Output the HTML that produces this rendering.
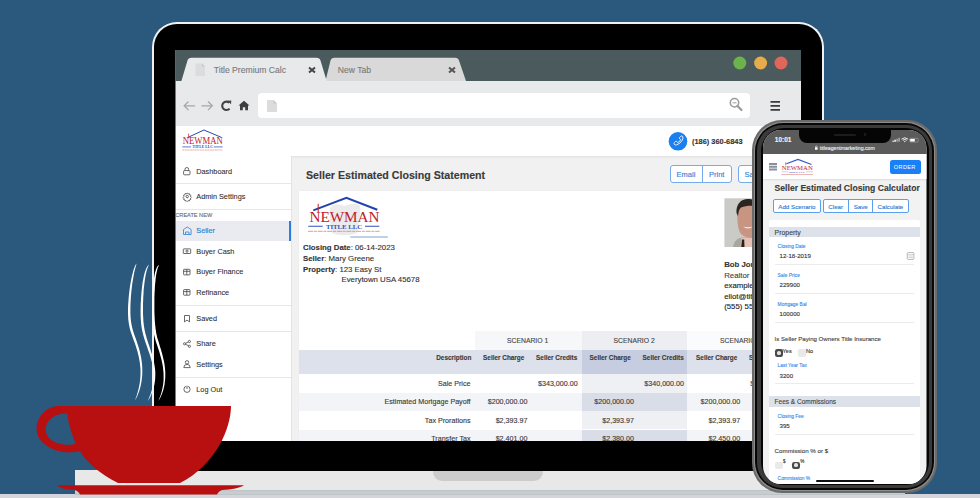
<!DOCTYPE html>
<html><head><meta charset="utf-8">
<style>
*{box-sizing:border-box;margin:0;padding:0}
html,body{width:980px;height:498px;overflow:hidden}
body{position:relative;background:#2b597e;font-family:"Liberation Sans",sans-serif;color:#333}
.a{position:absolute}
.t{position:absolute;white-space:nowrap;line-height:1;-webkit-text-stroke:.12px currentColor}
.full{position:absolute;left:0;top:0;width:980px;height:498px}
.sb{font-size:7.3px;color:#2e2e2e;left:196.3px;-webkit-text-stroke:.08px #2e2e2e}
.sep{position:absolute;left:175px;width:116px;height:1px;background:#e6e6e6}
.ico{position:absolute;left:183px}
.sc{font-size:6.8px;color:#454545}
.ch{font-size:6.4px;font-weight:bold;color:#3a3a3a}
.td{font-size:7.15px;color:#3a3a3a}
.pb{font-size:6.2px;color:#2a7ad8;top:203.8px}
.ph{font-size:6.9px;color:#444}
.pl{left:777.6px;font-size:4.9px;color:#3a8ae8}
.pv{left:779.6px;font-size:6.1px;color:#333}
.pu{left:775px;width:139px;height:1px;background:#ececec}
</style></head><body>

<!-- bottom strip -->
<div class="a" style="left:0;top:494px;width:980px;height:4px;background:#d3d4e0"></div>

<!-- laptop base -->
<div class="a" style="left:75px;top:470px;width:830px;height:20px;background:#e8e8e8"></div>
<div class="a" style="left:75px;top:490px;width:830px;height:4.5px;background:#cbcbcb;border-top:1px solid #bcc5cc;border-bottom:1px solid #bcc5cc"></div>
<div class="a" style="left:433px;top:470px;width:110px;height:11px;background:#cccccc;border-radius:0 0 9px 9px"></div>

<!-- laptop body -->
<div class="a" style="left:152px;top:22px;width:672px;height:449px;background:#000;border:2.1px solid #f0f1f3;border-bottom:none;border-radius:25px 25px 0 0"></div>

<!-- ============ SCREEN ============ -->
<div class="full" style="clip-path:inset(50px 179px 57px 175px)">
  <div class="a" style="left:175px;top:50px;width:626px;height:391px;background:#f1f1f1"></div>
  <!-- tab strip -->
  <div class="a" style="left:175px;top:50px;width:626px;height:31px;background:#4b5a5c"></div>
  <svg class="full" viewBox="0 0 980 498">
    <path d="M325.5,81 L330.5,60.5 Q331.3,57.7 334.5,57.7 L455,57.7 Q458.2,57.7 459,60.5 L466,81 Z" fill="#d9d9d9"/>
    <path d="M181.4,81 L187.5,60.5 Q188.3,57.7 191.5,57.7 L316.5,57.7 Q319.7,57.7 320.5,60.5 L326.7,81 Z" fill="#e8e9eb"/>
    <circle cx="739.8" cy="63" r="6.5" fill="#6ab34d"/>
    <circle cx="760.6" cy="63" r="6.5" fill="#e6ab4a"/>
    <circle cx="781" cy="63" r="6.5" fill="#e0665b"/>
  </svg>
  <div class="t" style="left:213.8px;top:65.6px;font-size:8.6px;color:#7a7a7a">Title Premium Calc</div>
  <div class="t" style="left:337.8px;top:65.6px;font-size:8.6px;color:#7a7a7a">New Tab</div>
  <!-- toolbar -->
  <div class="a" style="left:175px;top:81px;width:626px;height:45px;background:#e8e9eb"></div>
  <div class="a" style="left:258px;top:92.5px;width:492px;height:25.3px;background:#fff;border-radius:4px"></div>
  <svg class="full" viewBox="0 0 980 498">
    <!-- tab icons -->
    <path d="M195.5,63.5 h6.5 l3,3 v9.5 h-9.5 z" fill="#dcdcdc"/>
    <path d="M202,63.5 v3 h3 z" fill="#c8c8c8"/>
    <path d="M309,67.5 l6,5 M315,67.5 l-6,5" stroke="#444" stroke-width="2"/>
    <path d="M449,67.5 l6,5 M455,67.5 l-6,5" stroke="#555" stroke-width="2"/>
    <!-- nav -->
    <path d="M184,105.8 h11 M188.5,101.5 l-4.3,4.3 l4.3,4.3" stroke="#a8a8a8" stroke-width="1.3" fill="none"/>
    <path d="M201.5,105.8 h11 M208,101.5 l4.3,4.3 l-4.3,4.3" stroke="#a8a8a8" stroke-width="1.3" fill="none"/>
    <path d="M229.3,102.8 A4.2,4.2 0 1 0 229.6,108.6" stroke="#444" stroke-width="2.1" fill="none"/><path d="M227.5,100.8 l3.8,-.3 -.3,3.8 z" fill="#444"/>
    <path d="M238.5,105.5 l5.5,-4.8 l5.5,4.8 h-1.5 v4.8 h-2.8 v-3 h-2.4 v3 h-2.8 v-4.8 z" fill="#3e3e3e"/>
    <path d="M267,100 h6.5 l3.5,3.5 v8.5 h-10 z" fill="#dcdcdc"/>
    <path d="M273.5,100 v3.5 h3.5 z" fill="#cacaca"/>
    <!-- search -->
    <circle cx="734.5" cy="102.8" r="4.2" stroke="#9a9a9a" stroke-width="1.5" fill="none"/>
    <path d="M732.5,102.8 h4" stroke="#9a9a9a" stroke-width="1"/>
    <path d="M737.5,106 l4,4" stroke="#9a9a9a" stroke-width="2.2" stroke-linecap="round"/>
    <!-- hamburger -->
    <path d="M770.5,101.8 h9.5 M770.5,105.8 h9.5 M770.5,109.8 h9.5" stroke="#3a3a3a" stroke-width="1.7"/>
  </svg>
  <!-- app header -->
  <div class="a" style="left:175px;top:126px;width:626px;height:30px;background:#fff;box-shadow:0 1px 2px rgba(0,0,0,.08)"></div>
  <svg class="full" viewBox="0 0 980 498">
    <path d="M187.5,137.6 L203.9,130 L221.2,137.3" stroke="#2a48b0" stroke-width="1" fill="none"/>
    <path d="M188.6,133.6 v4.6" stroke="#c22" stroke-width=".7"/>
    <text x="182.8" y="144.4" font-family="Liberation Serif" font-size="9.6" fill="#c0222c" textLength="39.9" lengthAdjust="spacingAndGlyphs">NEWMAN</text>
    <path d="M182.3,146.9 h8.7 M213.7,146.9 h9" stroke="#3a5ac8" stroke-width=".8"/>
    <text x="192.6" y="148.4" font-family="Liberation Serif" font-size="4" fill="#2a48b0" font-weight="bold" textLength="20.4" lengthAdjust="spacingAndGlyphs">TITLE LLC</text>
    <path d="M182.3,150 h40.4" stroke="#d86060" stroke-width=".7" stroke-dasharray="2 .5" opacity=".75"/>
  </svg>
  <svg class="full" viewBox="0 0 980 498">
    <circle cx="678" cy="141.3" r="9.3" fill="#1a7ff0"/>
    <path d="M674.5,144.5 q-1,-1 0,-2 l1,-1 q1,-.5 1.6,.3 l.6,.8 q2.2,-.8 3,-3 l-.8,-.6 q-.8,-.6 -.3,-1.6 l1,-1 q1,-1 2,0 q1,1.5 -.5,4 q-2,3.5 -5.5,4.5 q-1.5,.3 -2.1,-.4z" fill="none" stroke="#fff" stroke-width=".9"/>
  </svg>
  <div class="t" style="left:692px;top:137.8px;font-size:7.4px;font-weight:bold;color:#333">(186) 360-6843</div>

  <!-- sidebar -->
  <div class="a" style="left:175px;top:156px;width:116.5px;height:285px;background:#fff;border-right:1px solid #e3e3e3"></div>
  <div class="sep" style="top:183.3px"></div>
  <div class="sep" style="top:209.3px"></div>
  <div class="sep" style="top:305px"></div>
  <div class="sep" style="top:331.2px"></div>
  <div class="sep" style="top:377.3px"></div>
  <div class="a" style="left:175px;top:221px;width:116px;height:19.7px;background:#e9ebf1;border-right:2px solid #2a7ee0"></div>
  <div class="t sb" style="top:167.5px">Dashboard</div>
  <div class="t sb" style="top:193.3px">Admin Settings</div>
  <div class="t" style="left:175.3px;top:213.1px;font-size:5.6px;color:#6c6c6c">CREATE NEW</div>
  <div class="t sb" style="top:227.2px;color:#2a7ee0">Seller</div>
  <div class="t sb" style="top:247.7px">Buyer Cash</div>
  <div class="t sb" style="top:268.4px">Buyer Finance</div>
  <div class="t sb" style="top:288.7px">Refinance</div>
  <div class="t sb" style="top:314.7px">Saved</div>
  <div class="t sb" style="top:340.4px">Share</div>
  <div class="t sb" style="top:360.7px">Settings</div>
  <div class="t sb" style="top:386.4px">Log Out</div>
  <svg class="full" viewBox="0 0 980 498" fill="none" stroke="#444" stroke-width=".8">
    <!-- lock -->
    <rect x="183.6" y="170.6" width="6.4" height="4.2" rx=".8"/>
    <path d="M185,170.6 v-1.3 a1.8,1.8 0 0 1 3.6,0 v1.3"/>
    <!-- gear -->
    <path d="M187.2,193 l.9,.9 1.2,-.3 .3,1.2 1.2,.4 -.3,1.2 .9,.9 -.9,.9 .3,1.2 -1.2,.4 -.3,1.2 -1.2,-.3 -.9,.9 -.9,-.9 -1.2,.3 -.3,-1.2 -1.2,-.4 .3,-1.2 -.9,-.9 .9,-.9 -.3,-1.2 1.2,-.4 .3,-1.2 1.2,.3 z"/><circle cx="187.2" cy="196.6" r="1.2"/>
    <!-- seller icon -->
    <path d="M183.5,234.5 v-5 l3.8,-2.5 l3.8,2.5 v5 z M185.5,234.5 v-2.5 h3.5 v2.5" stroke="#2a7ee0"/>
    <!-- buyer cash -->
    <rect x="183.3" y="248.9" width="7.4" height="4.6" rx=".5"/><circle cx="187" cy="251.2" r="1.1"/>
    <!-- buyer finance -->
    <rect x="183.6" y="269.3" width="6.4" height="5.6" rx=".6"/><path d="M183.6,271.3 h6.4 M186.8,269.3 v5.6"/>
    <!-- refinance -->
    <rect x="183.6" y="289.6" width="6.4" height="5.6" rx=".6"/><path d="M183.6,291.6 h6.4 M186.8,289.6 v5.6"/>
    <!-- saved -->
    <path d="M184.5,315.5 h5 v6.4 l-2.5,-1.8 l-2.5,1.8 z"/>
    <!-- share -->
    <circle cx="184.6" cy="343.8" r="1.1"/><circle cx="189.4" cy="341.5" r="1.1"/><circle cx="189.4" cy="346.3" r="1.1"/>
    <path d="M185.6,343.3 l2.8,-1.3 M185.6,344.3 l2.8,1.4"/>
    <!-- settings (user) -->
    <circle cx="187" cy="362.3" r="1.7"/><path d="M183.8,367.6 q0,-3.2 3.2,-3.2 q3.2,0 3.2,3.2 z"/>
    <!-- logout -->
    <circle cx="187" cy="389.3" r="3.1"/><path d="M187,385.5 v3.3" stroke="#fff" stroke-width="2"/><path d="M187,385.8 v3.3"/>
  </svg>

  <!-- ===== main content ===== -->
  <div class="t" style="left:306px;top:169.7px;font-size:10.65px;font-weight:bold;color:#3a3a3a">Seller Estimated Closing Statement</div>
  <div class="a" style="left:669.8px;top:165.4px;width:62px;height:17.8px;border:1px solid #74acec;border-radius:3px;background:#fff"></div>
  <div class="a" style="left:701.5px;top:165.4px;width:1px;height:17.8px;background:#74acec"></div>
  <div class="a" style="left:737.9px;top:165.4px;width:40px;height:17.8px;border:1px solid #74acec;border-radius:3px;background:#fff"></div>
  <div class="t" style="left:676.6px;top:170.6px;font-size:7.5px;color:#2f7fd8">Email</div>
  <div class="t" style="left:709px;top:170.6px;font-size:7.5px;color:#2f7fd8">Print</div>
  <div class="t" style="left:744.6px;top:170.6px;font-size:7.5px;color:#2f7fd8">Save</div>

  <!-- card -->
  <div class="a" style="left:298.5px;top:190.8px;width:496px;height:260px;background:#fff;box-shadow:0 0 1px rgba(0,0,0,.08)"></div>
  <svg class="full" viewBox="0 0 980 498">
    <path d="M330,208 C333,203 340,204 344,206 C350,204 357,202 360,206 C361,214 359,224 357,233 C350,236 338,236 332,233 C330,225 329,215 330,208Z" fill="#ebebeb"/>
    <path d="M313.3,210.4 L346.4,197.7 L377.3,209.7" stroke="#2442b0" stroke-width="2" fill="none"/>
    <path d="M318.2,203.8 v8.5" stroke="#c0202a" stroke-width="1"/>
    <text x="309.4" y="221.6" font-family="Liberation Serif" font-size="14.5" fill="#c0202a" textLength="70.2" lengthAdjust="spacingAndGlyphs">NEWMAN</text>
    <path d="M308.3,226.2 h14.4 M365,226.2 h14.3" stroke="#3050c0" stroke-width="1.1"/>
    <text x="326" y="228.8" font-family="Liberation Serif" font-weight="bold" font-size="7" fill="#3050c0" textLength="36" lengthAdjust="spacingAndGlyphs">TITLE LLC</text>
    <path d="M308,231.3 h71.6" stroke="#d46a6a" stroke-width=".9" stroke-dasharray="5 .8 3 .8" opacity=".75"/>
    <path d="M350.3,237 h37.5" stroke="#a8c0dc" stroke-width="1.3"/>
  </svg>
  <div class="t" style="left:303px;top:244px;font-size:7.8px;color:#333"><b>Closing Date</b>: 06-14-2023</div>
  <div class="t" style="left:303px;top:254.6px;font-size:7.8px;color:#333"><b>Seller</b>: Mary Greene</div>
  <div class="t" style="left:303px;top:265.6px;font-size:7.8px;color:#333"><b>Property</b>: 123 Easy St</div>
  <div class="t" style="left:341.5px;top:276.2px;font-size:7.8px;color:#333">Everytown USA 45678</div>

  <!-- realtor -->
  <svg class="full" viewBox="0 0 980 498">
    <rect x="724.4" y="198.3" width="30" height="48.7" fill="#cacac6"/>
    <path d="M733,247 C734,241 737,238.5 742,237.5 L756,237.5 L756,247 Z" fill="#a9a69e"/>
    <path d="M740.5,247 L741.5,238 L756,238 L756,247 Z" fill="#e6c2b6"/>
    <path d="M741.2,247 L742,239.5 L744.2,239.5 L744.5,247 Z" fill="#2a2220"/>
    <path d="M737.2,214 C737,206 741,201 748,200.5 C753,200.2 756,203 756,206 L756,237.5 C752,238.5 745,238 741,234 C738,230 737.3,222 737.2,214 Z" fill="#c99583"/>
    <path d="M736.5,213 C736,205 740,199.5 747,199 C752,198.8 756,200.5 756,202 L756,206.5 C752,205 746,205.5 741,207.5 C739,209 738.5,212 738,216 Z" fill="#2b2522"/>
    <path d="M743,226.5 Q748,230.5 753,226.5 Q748,228 743,226.5 Z" fill="#f4eee8"/>
  </svg>
  <div class="t" style="left:724.2px;top:261.4px;font-size:7.8px;font-weight:bold;color:#333">Bob Jones</div>
  <div class="t" style="left:724.2px;top:271.9px;font-size:7.8px;color:#444">Realtor</div>
  <div class="t" style="left:724.2px;top:282.4px;font-size:7.8px;color:#222">example</div>
  <div class="t" style="left:724.2px;top:292.8px;font-size:7.8px;color:#222">eliot@titleagent</div>
  <div class="t" style="left:724.2px;top:303.4px;font-size:7.8px;color:#222">(555) 555-5555</div>

  <!-- table -->
  <div class="a" style="left:475px;top:331px;width:106.5px;height:19px;background:#f6f7f9"></div>
  <div class="a" style="left:581.5px;top:331px;width:105.5px;height:19px;background:#eceef2"></div>
  <div class="a" style="left:687px;top:331px;width:110px;height:19px;background:#fafbfc"></div>
  <div class="a" style="left:298.5px;top:349.8px;width:500px;height:24px;background:#dde1eb"></div>
  <div class="a" style="left:581.5px;top:349.8px;width:105.5px;height:24px;background:#c6cde0"></div>
  <div class="a" style="left:298.5px;top:393px;width:500px;height:18.3px;background:#f3f4f7"></div>
  <div class="a" style="left:298.5px;top:429.5px;width:500px;height:18.3px;background:#f3f4f7"></div>
  <div class="a" style="left:581.5px;top:373.8px;width:105.5px;height:19.2px;background:#eff0f3"></div>
  <div class="a" style="left:581.5px;top:393px;width:105.5px;height:18.3px;background:#d9dde7"></div>
  <div class="a" style="left:581.5px;top:411.3px;width:105.5px;height:18.2px;background:#eff0f3"></div>
  <div class="a" style="left:581.5px;top:429.5px;width:105.5px;height:18.3px;background:#d9dde7"></div>

  <div class="t sc" style="left:507px;top:337.6px">SCENARIO 1</div>
  <div class="t sc" style="left:613.5px;top:337.6px">SCENARIO 2</div>
  <div class="t sc" style="left:720px;top:337.6px">SCENARIO 3</div>
  <div class="t ch" style="right:508.6px;top:354.6px">Description</div>
  <div class="t ch" style="left:483.1px;top:354.6px">Seller Charge</div>
  <div class="t ch" style="left:536.1px;top:354.6px">Seller Credits</div>
  <div class="t ch" style="left:589.6px;top:354.6px">Seller Charge</div>
  <div class="t ch" style="left:642.6px;top:354.6px">Seller Credits</div>
  <div class="t ch" style="left:696.1px;top:354.6px">Seller Charge</div>
  <div class="t ch" style="left:749.1px;top:354.6px">Seller Credits</div>

  <div class="t td r" style="right:509.5px;top:380.6px">Sale Price</div>
  <div class="t td r" style="right:509.5px;top:399.4px">Estimated Mortgage Payoff</div>
  <div class="t td r" style="right:509.5px;top:417.7px">Tax Prorations</div>
  <div class="t td r" style="right:509.5px;top:436.1px">Transfer Tax</div>

  <div class="t td r" style="right:402.3px;top:380.6px">$343,000.00</div>
  <div class="t td r" style="right:296px;top:380.6px">$340,000.00</div>
  <div class="t td r" style="right:190px;top:380.6px">$345,000.00</div>
  <div class="t td r" style="right:452.6px;top:399.4px">$200,000.00</div>
  <div class="t td r" style="right:346px;top:399.4px">$200,000.00</div>
  <div class="t td r" style="right:239.8px;top:399.4px">$200,000.00</div>
  <div class="t td r" style="right:452.6px;top:417.7px">$2,393.97</div>
  <div class="t td r" style="right:346px;top:417.7px">$2,393.97</div>
  <div class="t td r" style="right:239.8px;top:417.7px">$2,393.97</div>
  <div class="t td r" style="right:452.6px;top:436.1px">$2,401.00</div>
  <div class="t td r" style="right:346px;top:436.1px">$2,380.00</div>
  <div class="t td r" style="right:239.8px;top:436.1px">$2,450.00</div>
</div>


<!-- ============ PHONE ============ -->
<div class="a" style="left:752px;top:120px;width:185px;height:373px;border-radius:30px;background:#6a6a6a"></div>
<div class="a" style="left:754px;top:122px;width:181px;height:369px;border-radius:28px;background:#8c8c8c"></div>
<div class="a" style="left:755px;top:123px;width:179px;height:367px;border-radius:28px;background:#070707"></div>
<div class="a" style="left:757.3px;top:125.3px;width:174.4px;height:362.4px;border-radius:25px;background:#3a3a3a"></div>
<div class="a" style="left:760.5px;top:128px;width:168px;height:357px;border-radius:23px;background:#050505"></div>
<div class="full" style="clip-path:inset(130px 53.5px 14px 763px round 18px)">
  <div class="a" style="left:763px;top:130px;width:164px;height:354px;background:#f2f2f2"></div>
  <div class="a" style="left:763px;top:130px;width:164px;height:24.3px;background:#5b5b5b"></div>
  <div class="a" style="left:798.5px;top:128px;width:92px;height:15px;background:#050505;border-radius:0 0 8px 8px"></div>
  <div class="a" style="left:833.5px;top:133.5px;width:22px;height:2px;background:#1c1c1c;border-radius:1px"></div>
  <div class="a" style="left:863.5px;top:133.3px;width:2.4px;height:2.4px;background:#1a1a3a;border-radius:50%"></div>
  <div class="t" style="left:774.8px;top:136.9px;font-size:6.5px;font-weight:bold;color:#f4f4f4">10:01</div>
  <svg class="full" viewBox="0 0 980 498">
    <path d="M892.5,141.8 h1.2 v-1 h-1.2z M894.5,141.8 h1.2 v-2 h-1.2z M896.5,141.8 h1.2 v-3 h-1.2z M898.5,141.8 h1.2 v-4 h-1.2z" fill="#bbb"/>
    <path d="M892.5,141.8 h1.2 v-1 h-1.2z M894.5,141.8 h1.2 v-2 h-1.2z" fill="#fff"/>
    <path d="M901.5,139.2 q3.3,-3 6.6,0 M902.8,140.3 q2,-1.8 4,0" stroke="#fff" stroke-width=".9" fill="none"/>
    <circle cx="904.8" cy="141.6" r=".7" fill="#fff"/>
    <rect x="909.6" y="138.3" width="8.6" height="3.8" rx="1" fill="none" stroke="#aaa" stroke-width=".6"/>
    <rect x="910.2" y="138.9" width="4.6" height="2.6" fill="#fff"/>
    <rect x="914.8" y="137.2" width="2" height="1" fill="none"/>
    <rect x="815" y="147.2" width="2.6" height="2.6" rx=".3" fill="#fff"/>
    <path d="M815.6,147.3 v-.8 a.7,.7 0 0 1 1.4,0 v.8" stroke="#fff" stroke-width=".5" fill="none"/>
  </svg>
  <div class="t" style="left:819.7px;top:145.6px;font-size:5.2px;color:#f0f0f0">titleagentmarketing.com</div>
  <!-- header -->
  <div class="a" style="left:763px;top:154.3px;width:164px;height:24.7px;background:#fff;box-shadow:0 1px 1.5px rgba(0,0,0,.1)"></div>
  <div class="a" style="left:769px;top:163.4px;width:8px;height:1.3px;background:#8a8f99;box-shadow:0 2.75px 0 #8a8f99,0 5.5px 0 #8a8f99"></div>
  <svg class="full" viewBox="0 0 980 498">
    <path d="M786.5,163.8 L798,159.4 L811.5,164.6" stroke="#3656c8" stroke-width="1.1" fill="none"/>
    <path d="M785.8,162.3 v3" stroke="#c22" stroke-width=".7"/>
    <text x="781.8" y="170.1" font-family="Liberation Serif" font-size="6.4" fill="#c8222c" textLength="31" lengthAdjust="spacingAndGlyphs">NEWMAN</text>
    <path d="M781.5,171.8 h6.8 M806,171.8 h6.8" stroke="#c5cde8" stroke-width=".9"/>
    <text x="789" y="173.2" font-family="Liberation Serif" font-size="2.8" fill="#2a48b0" font-weight="bold" textLength="15.8" lengthAdjust="spacingAndGlyphs">TITLE LLC</text>
    <path d="M781.2,174.5 h31.6" stroke="#d85050" stroke-width=".6" opacity=".7"/>
  </svg>
  <div class="a" style="left:889.5px;top:160px;width:31px;height:14px;background:#1a80f8;border-radius:2.5px"></div>
  <div class="t" style="left:893.8px;top:165.2px;font-size:5.6px;color:#fff;letter-spacing:.35px;-webkit-text-stroke:0">ORDER</div>
  <!-- body -->
  <div class="t" style="left:774.6px;top:184px;font-size:8.6px;font-weight:bold;color:#3a3a3a">Seller Estimated Closing Calculator</div>
  <div class="a" style="left:773px;top:199.4px;width:47.8px;height:14px;border:1px solid #5aa0ee;border-radius:2px;background:#fff"></div>
  <div class="a" style="left:823.3px;top:199.4px;width:85.7px;height:14px;border:1px solid #5aa0ee;border-radius:2px;background:#fff"></div>
  <div class="a" style="left:848px;top:199.4px;width:.9px;height:14px;background:#5aa0ee"></div>
  <div class="a" style="left:871.8px;top:199.4px;width:.9px;height:14px;background:#5aa0ee"></div>
  <div class="t pb" style="left:778.3px">Add Scenario</div>
  <div class="t pb" style="left:828.3px">Clear</div>
  <div class="t pb" style="left:853.7px">Save</div>
  <div class="t pb" style="left:877.5px">Calculate</div>
  <!-- card -->
  <div class="a" style="left:769px;top:220.2px;width:151.2px;height:270px;background:#fff;border-radius:2px"></div>
  <div class="a" style="left:769px;top:226.5px;width:151.2px;height:10.5px;background:#dde1ea"></div>
  <div class="a" style="left:769px;top:396.2px;width:151.2px;height:10.8px;background:#dde1ea"></div>
  <div class="t ph" style="left:774.6px;top:229.6px">Property</div>
  <div class="t ph" style="left:774.6px;top:399.2px;font-size:6.5px">Fees &amp; Commissions</div>
  <div class="t pl" style="top:244.9px">Closing Date</div>
  <div class="t pv" style="top:252.7px">12-18-2019</div>
  <div class="a pu" style="top:264px"></div>
  <div class="t pl" style="top:273.8px">Sale Price</div>
  <div class="t pv" style="top:281.5px">229900</div>
  <div class="a pu" style="top:293px"></div>
  <div class="t pl" style="top:302.7px">Mortgage Bal</div>
  <div class="t pv" style="top:310.7px">100000</div>
  <div class="a pu" style="top:321.9px"></div>
  <div class="t" style="left:774.6px;top:335.8px;font-size:6.1px;color:#444">Is Seller Paying Owners Title Insurance</div>
  <div class="a" style="left:775px;top:349px;width:8.4px;height:7.5px;border-radius:2.2px;background:#4a4a4a"><div class="a" style="left:2.3px;top:1.9px;width:3.8px;height:3.7px;border-radius:50%;background:#e4e4e4"></div></div>
  <div class="a" style="left:798px;top:349px;width:8px;height:7.5px;border-radius:2px;background:#e9e9e9"></div>
  <div class="t" style="left:782.6px;top:348.7px;font-size:5.6px;color:#333">Yes</div>
  <div class="t" style="left:806px;top:348.7px;font-size:5.6px;color:#333">No</div>
  <div class="t pl" style="top:364.4px">Last Year Tax</div>
  <div class="t pv" style="top:372.7px">3200</div>
  <div class="a pu" style="top:383.4px"></div>
  <div class="t pl" style="top:414.5px">Closing Fee</div>
  <div class="t pv" style="top:422.8px">395</div>
  <div class="a pu" style="top:434.3px"></div>
  <div class="t" style="left:774.6px;top:447.9px;font-size:6.2px;color:#444">Commission % or $</div>
  <div class="a" style="left:775.3px;top:461.5px;width:7.5px;height:7.5px;border-radius:2px;background:#e9e9e9"></div>
  <div class="t" style="left:783px;top:459.6px;font-size:4.6px;color:#333">$</div>
  <div class="a" style="left:792px;top:461.5px;width:8.2px;height:7.5px;border-radius:2.2px;background:#4a4a4a"><div class="a" style="left:2.2px;top:1.9px;width:3.8px;height:3.7px;border-radius:50%;background:#e4e4e4"></div></div>
  <div class="t" style="left:800.2px;top:459.6px;font-size:4.6px;color:#333">%</div>
  <div class="t pl" style="top:476.6px">Commission %</div>
  <svg class="full" viewBox="0 0 980 498">
    <rect x="907.3" y="252.6" width="6.6" height="6.8" rx=".8" fill="none" stroke="#999" stroke-width=".7"/>
    <path d="M907.3,254.6 h6.6 M908.5,256 h4.4 M908.5,257.5 h4.4" stroke="#aaa" stroke-width=".5"/>
  </svg>
  <div class="a" style="left:815.5px;top:479.5px;width:58.5px;height:2px;background:#111;border-radius:1px"></div>
</div>

<div class="a" style="left:175px;top:50px;width:1px;height:391px;background:#3f6f96;opacity:.85"></div>
<!-- steam -->
<svg class="full" viewBox="0 0 980 498" fill="#fff">
<path d="M136.3,263.8 L135.5,265.0 L134.8,266.4 L134.2,268.0 L133.6,269.8 L133.0,271.8 L132.5,273.9 L131.9,276.1 L131.4,278.4 L131.0,280.8 L130.5,283.3 L130.1,285.8 L129.7,288.4 L129.4,291.0 L129.1,293.6 L128.8,296.2 L128.6,298.8 L128.4,301.4 L128.2,303.9 L128.1,306.4 L128.0,308.8 L128.0,311.1 L128.0,313.3 L128.1,315.5 L128.2,317.6 L128.3,319.7 L128.6,321.7 L128.8,323.6 L129.2,325.5 L129.6,327.4 L130.0,329.2 L130.5,331.0 L131.1,332.8 L131.7,334.6 L132.3,336.3 L132.9,338.1 L133.6,339.9 L134.3,341.8 L135.0,343.7 L135.7,345.7 L136.3,347.7 L137.0,349.9 L137.6,352.1 L138.2,354.4 L138.8,356.7 L139.2,359.2 L139.7,361.7 L140.0,364.2 L140.3,366.9 L140.5,369.6 L140.5,372.3 L140.5,375.1 L140.3,378.0 L140.0,381.0 L139.6,384.0 L139.0,387.0 L138.3,390.1 L137.4,393.2 L136.4,396.5 L135.2,399.8 L135.4,399.8 L137.0,396.7 L138.3,393.5 L139.4,390.4 L140.3,387.3 L141.0,384.2 L141.5,381.2 L141.9,378.2 L142.2,375.2 L142.3,372.3 L142.3,369.5 L142.2,366.7 L142.0,364.0 L141.7,361.4 L141.3,358.8 L140.9,356.3 L140.3,353.9 L139.8,351.5 L139.2,349.2 L138.5,347.1 L137.9,345.0 L137.2,342.9 L136.6,341.0 L135.9,339.1 L135.3,337.3 L134.6,335.5 L134.0,333.8 L133.4,332.0 L132.9,330.3 L132.4,328.6 L132.0,326.8 L131.6,325.0 L131.3,323.2 L131.0,321.3 L130.8,319.4 L130.6,317.4 L130.5,315.4 L130.4,313.3 L130.4,311.1 L130.4,308.8 L130.4,306.4 L130.5,304.0 L130.6,301.5 L130.8,299.0 L130.9,296.4 L131.2,293.8 L131.4,291.2 L131.7,288.6 L132.0,286.1 L132.3,283.6 L132.7,281.1 L133.1,278.7 L133.5,276.4 L133.9,274.2 L134.3,272.1 L134.8,270.2 L135.2,268.4 L135.7,266.7 L136.1,265.2 L136.5,263.8Z"/>
<path d="M148.7,264.8 L147.8,265.7 L147.0,267.0 L146.2,268.5 L145.5,270.2 L144.9,272.1 L144.4,274.1 L143.8,276.2 L143.4,278.5 L142.9,280.8 L142.5,283.3 L142.2,285.8 L141.9,288.4 L141.6,291.0 L141.4,293.6 L141.2,296.2 L141.0,298.8 L140.9,301.4 L140.7,303.9 L140.7,306.4 L140.6,308.8 L140.6,311.1 L140.6,313.3 L140.6,315.5 L140.7,317.6 L140.8,319.6 L141.0,321.6 L141.1,323.5 L141.4,325.4 L141.6,327.3 L141.9,329.1 L142.3,330.9 L142.7,332.7 L143.1,334.5 L143.6,336.3 L144.1,338.1 L144.7,339.9 L145.3,341.8 L146.0,343.7 L146.7,345.7 L147.4,347.8 L148.1,349.9 L148.9,352.1 L149.7,354.4 L150.4,356.8 L151.1,359.2 L151.8,361.7 L152.4,364.3 L152.8,366.9 L153.2,369.6 L153.5,372.4 L153.6,375.2 L153.6,378.2 L153.4,381.1 L153.1,384.2 L152.5,387.3 L151.7,390.4 L150.7,393.7 L149.4,397.0 L148.0,400.5 L148.2,400.5 L150.1,397.3 L151.5,394.0 L152.8,390.8 L153.7,387.6 L154.4,384.4 L154.9,381.3 L155.2,378.2 L155.3,375.2 L155.3,372.3 L155.1,369.4 L154.7,366.6 L154.3,363.9 L153.8,361.3 L153.2,358.7 L152.5,356.2 L151.8,353.8 L151.0,351.4 L150.3,349.2 L149.6,347.0 L148.9,344.9 L148.2,342.9 L147.6,341.0 L147.0,339.2 L146.5,337.4 L146.0,335.6 L145.5,333.9 L145.1,332.1 L144.7,330.4 L144.4,328.7 L144.1,326.9 L143.8,325.1 L143.6,323.3 L143.4,321.4 L143.3,319.5 L143.2,317.5 L143.1,315.4 L143.0,313.3 L143.0,311.1 L143.0,308.8 L143.0,306.4 L143.0,304.0 L143.1,301.5 L143.2,298.9 L143.3,296.3 L143.5,293.7 L143.6,291.1 L143.8,288.6 L144.1,286.0 L144.4,283.5 L144.7,281.1 L145.0,278.8 L145.4,276.5 L145.8,274.4 L146.2,272.4 L146.7,270.6 L147.2,268.9 L147.8,267.4 L148.3,266.1 L148.9,264.8Z"/>
<path d="M159.2,264.9 L158.3,265.4 L157.5,266.2 L156.8,267.4 L156.2,268.8 L155.7,270.4 L155.1,272.3 L154.7,274.3 L154.3,276.5 L153.9,278.8 L153.5,281.3 L153.2,283.9 L153.0,286.6 L152.7,289.3 L152.5,292.1 L152.4,295.0 L152.2,297.8 L152.2,300.6 L152.1,303.4 L152.0,306.2 L152.0,308.9 L152.0,311.5 L152.1,314.0 L152.2,316.5 L152.2,318.9 L152.4,321.1 L152.5,323.3 L152.7,325.4 L152.9,327.4 L153.1,329.3 L153.4,331.1 L153.7,332.8 L154.0,334.4 L154.4,336.0 L154.8,337.5 L155.2,339.1 L155.6,340.6 L156.1,342.3 L156.7,343.9 L157.3,345.7 L157.9,347.6 L158.6,349.7 L159.3,351.8 L159.9,354.1 L160.6,356.4 L161.3,358.9 L161.9,361.5 L162.4,364.1 L162.9,366.8 L163.2,369.6 L163.5,372.5 L163.6,375.4 L163.6,378.4 L163.5,381.4 L163.1,384.5 L162.6,387.6 L161.9,390.7 L161.0,393.9 L159.8,397.2 L158.5,400.5 L158.7,400.5 L160.4,397.4 L161.8,394.2 L163.0,391.0 L163.8,387.9 L164.5,384.7 L164.9,381.5 L165.2,378.4 L165.3,375.4 L165.3,372.4 L165.1,369.4 L164.8,366.6 L164.4,363.8 L163.9,361.0 L163.3,358.4 L162.7,355.9 L162.1,353.5 L161.4,351.2 L160.8,349.0 L160.1,346.9 L159.5,345.0 L159.0,343.2 L158.5,341.5 L158.0,339.9 L157.5,338.4 L157.1,336.9 L156.8,335.4 L156.4,333.9 L156.1,332.3 L155.9,330.7 L155.6,328.9 L155.4,327.1 L155.2,325.2 L155.0,323.1 L154.8,321.0 L154.7,318.7 L154.6,316.4 L154.5,314.0 L154.4,311.5 L154.4,308.9 L154.4,306.2 L154.4,303.5 L154.4,300.7 L154.4,297.9 L154.5,295.0 L154.6,292.2 L154.8,289.5 L154.9,286.7 L155.1,284.1 L155.4,281.5 L155.6,279.1 L155.9,276.8 L156.2,274.6 L156.6,272.6 L157.0,270.8 L157.4,269.2 L157.8,267.8 L158.3,266.7 L158.8,265.8 L159.2,265.1Z"/>
</svg>

<!-- cup -->
<svg class="full" viewBox="0 0 980 498">
  <path fill="#b81010" fill-rule="evenodd" d="M59,406 L231,406 C231,428 216,465 180,483 L118,483 C100,474 86,462 80,451 C72,453 65,452.5 60,451.5 C46,448 36.6,440 36.6,429 C36.6,416 47,406 59,406 Z M66,413.5 C54,413.5 45.7,421 45.7,429.5 C45.7,438 55,444.8 68,444.8 C71,444.8 73.5,444.3 75.8,443.4 C71,433 68,422 67.3,413.5 Z"/>
  <path fill="#b81010" d="M57,485.3 L244,485.3 C240,488 232,489.5 222,490 C219,491 218,493 217,494.4 L80,494.4 C79,493 78,491 75,490 C65,489.5 59,488 57,485.3 Z"/>
</svg>

</body></html>
